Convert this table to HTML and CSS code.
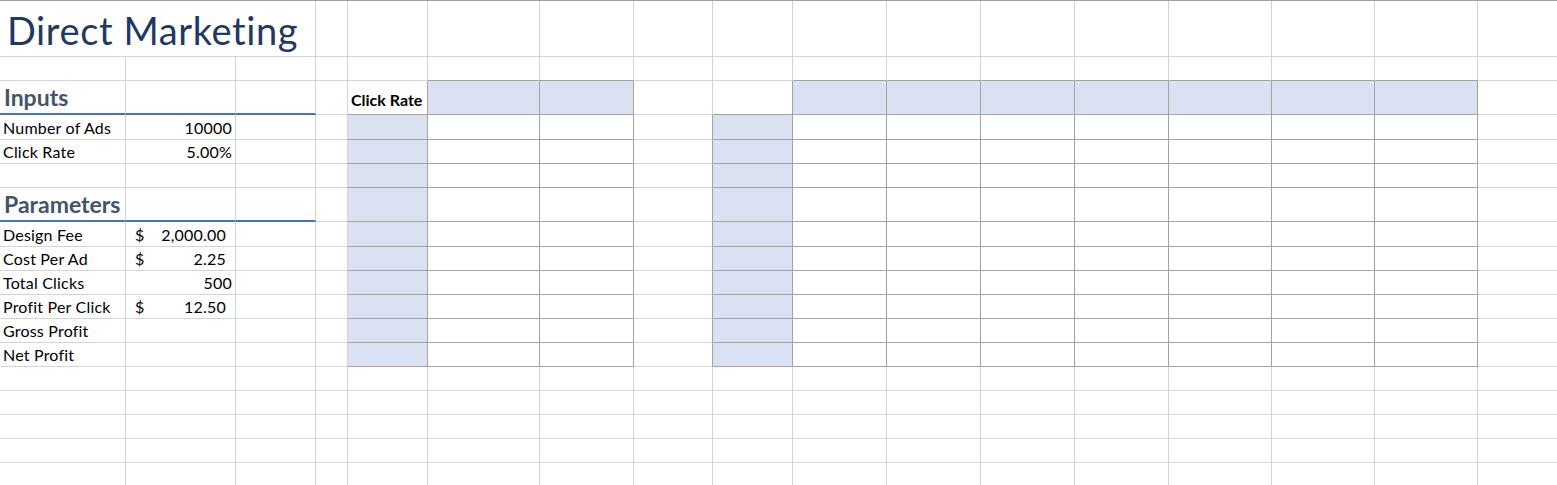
FILE: index.html
```html
<!DOCTYPE html>
<html lang="en">
<head>
<meta charset="utf-8">
<title>Direct Marketing</title>
<link rel="stylesheet" href="styles.css">
</head>
<body>
<div class="sheet">
  <!-- row 1 -->
  <div class="title">Direct Marketing</div>
  <div></div><div></div><div></div><div></div><div></div><div></div><div></div>
  <div></div><div></div><div></div><div></div><div></div><div></div><div></div>
  <!-- row 2 -->
  <div></div><div></div><div></div><div></div><div></div><div class="db"></div><div class="db"></div><div></div><div></div><div class="db"></div><div class="db"></div><div class="db"></div><div class="db"></div><div class="db"></div><div class="db"></div><div class="db"></div><div></div>
  <!-- row 3 -->
  <div class="hb heading">Inputs</div><div class="hb"></div><div class="hb"></div><div></div><div class="dr db bold">Click Rate</div><div class="sh dr db"></div><div class="sh dr db"></div><div></div><div class="dr db"></div><div class="sh dr db"></div><div class="sh dr db"></div><div class="sh dr db"></div><div class="sh dr db"></div><div class="sh dr db"></div><div class="sh dr db"></div><div class="sh dr db"></div><div></div>
  <!-- row 4 -->
  <div class="lbl">Number of Ads</div><div class="num">10000</div><div></div><div></div><div class="sh dr db"></div><div class="dr db"></div><div class="dr db"></div><div class="dr"></div><div class="sh dr db"></div><div class="dr db"></div><div class="dr db"></div><div class="dr db"></div><div class="dr db"></div><div class="dr db"></div><div class="dr db"></div><div class="dr db"></div><div></div>
  <!-- row 5 -->
  <div class="lbl">Click Rate</div><div class="num">5.00%</div><div></div><div></div><div class="sh dr db"></div><div class="dr db"></div><div class="dr db"></div><div class="dr"></div><div class="sh dr db"></div><div class="dr db"></div><div class="dr db"></div><div class="dr db"></div><div class="dr db"></div><div class="dr db"></div><div class="dr db"></div><div class="dr db"></div><div></div>
  <!-- row 6 -->
  <div></div><div></div><div></div><div></div><div class="sh dr db"></div><div class="dr db"></div><div class="dr db"></div><div class="dr"></div><div class="sh dr db"></div><div class="dr db"></div><div class="dr db"></div><div class="dr db"></div><div class="dr db"></div><div class="dr db"></div><div class="dr db"></div><div class="dr db"></div><div></div>
  <!-- row 7 -->
  <div class="hb heading">Parameters</div><div class="hb"></div><div class="hb"></div><div></div><div class="sh dr db"></div><div class="dr db"></div><div class="dr db"></div><div class="dr"></div><div class="sh dr db"></div><div class="dr db"></div><div class="dr db"></div><div class="dr db"></div><div class="dr db"></div><div class="dr db"></div><div class="dr db"></div><div class="dr db"></div><div></div>
  <!-- row 8 -->
  <div class="lbl">Design Fee</div><div class="acct"><span>$</span><span>2,000.00</span></div><div></div><div></div><div class="sh dr db"></div><div class="dr db"></div><div class="dr db"></div><div class="dr"></div><div class="sh dr db"></div><div class="dr db"></div><div class="dr db"></div><div class="dr db"></div><div class="dr db"></div><div class="dr db"></div><div class="dr db"></div><div class="dr db"></div><div></div>
  <!-- row 9 -->
  <div class="lbl">Cost Per Ad</div><div class="acct"><span>$</span><span>2.25</span></div><div></div><div></div><div class="sh dr db"></div><div class="dr db"></div><div class="dr db"></div><div class="dr"></div><div class="sh dr db"></div><div class="dr db"></div><div class="dr db"></div><div class="dr db"></div><div class="dr db"></div><div class="dr db"></div><div class="dr db"></div><div class="dr db"></div><div></div>
  <!-- row 10 -->
  <div class="lbl">Total Clicks</div><div class="num">500</div><div></div><div></div><div class="sh dr db"></div><div class="dr db"></div><div class="dr db"></div><div class="dr"></div><div class="sh dr db"></div><div class="dr db"></div><div class="dr db"></div><div class="dr db"></div><div class="dr db"></div><div class="dr db"></div><div class="dr db"></div><div class="dr db"></div><div></div>
  <!-- row 11 -->
  <div class="lbl">Profit Per Click</div><div class="acct"><span>$</span><span>12.50</span></div><div></div><div></div><div class="sh dr db"></div><div class="dr db"></div><div class="dr db"></div><div class="dr"></div><div class="sh dr db"></div><div class="dr db"></div><div class="dr db"></div><div class="dr db"></div><div class="dr db"></div><div class="dr db"></div><div class="dr db"></div><div class="dr db"></div><div></div>
  <!-- row 12 -->
  <div class="lbl">Gross Profit</div><div></div><div></div><div></div><div class="sh dr db"></div><div class="dr db"></div><div class="dr db"></div><div class="dr"></div><div class="sh dr db"></div><div class="dr db"></div><div class="dr db"></div><div class="dr db"></div><div class="dr db"></div><div class="dr db"></div><div class="dr db"></div><div class="dr db"></div><div></div>
  <!-- row 13 -->
  <div class="lbl">Net Profit</div><div></div><div></div><div></div><div class="sh dr db"></div><div class="dr db"></div><div class="dr db"></div><div class="dr"></div><div class="sh dr db"></div><div class="dr db"></div><div class="dr db"></div><div class="dr db"></div><div class="dr db"></div><div class="dr db"></div><div class="dr db"></div><div class="dr db"></div><div></div>
  <!-- rows 14-18 -->
  <div></div><div></div><div></div><div></div><div></div><div></div><div></div><div></div><div></div><div></div><div></div><div></div><div></div><div></div><div></div><div></div><div></div>
  <div></div><div></div><div></div><div></div><div></div><div></div><div></div><div></div><div></div><div></div><div></div><div></div><div></div><div></div><div></div><div></div><div></div>
  <div></div><div></div><div></div><div></div><div></div><div></div><div></div><div></div><div></div><div></div><div></div><div></div><div></div><div></div><div></div><div></div><div></div>
  <div></div><div></div><div></div><div></div><div></div><div></div><div></div><div></div><div></div><div></div><div></div><div></div><div></div><div></div><div></div><div></div><div></div>
  <div></div><div></div><div></div><div></div><div></div><div></div><div></div><div></div><div></div><div></div><div></div><div></div><div></div><div></div><div></div><div></div><div></div>
</div>
</body>
</html>
```

FILE: styles.css
```css
* {
  box-sizing: border-box;
  margin: 0;
  padding: 0;
}

html, body {
  background: #ffffff;
}

body {
  margin: 0;
  overflow: hidden;
  font-family: "Lato", "Noto Sans", sans-serif;
  font-size: 16px;
  letter-spacing: 0.2px;
  color: #000000;
}

.sheet {
  display: grid;
  grid-template-columns: 126px 110px 80px 32px 80px 112px 94px 79px 80px 94px 94px 94px 94px 103px 103px 103px 80px;
  grid-template-rows: 56px 24px 34px 25px 24px 24px 34px 25px repeat(10, 24px);
  border-top: 1px solid #9e9e9e;
  width: 1558px;
}

.sheet > div {
  border-right: 1px solid #d4d4d4;
  border-bottom: 1px solid #d4d4d4;
  display: flex;
  align-items: flex-end;
  padding: 0 3px 1px 3px;
  white-space: nowrap;
  line-height: 20px;
  min-width: 0;
}

.sheet > .title {
  grid-column: span 3;
  font-size: 38px;
  font-weight: 400;
  letter-spacing: 0.6px;
  color: #1f3864;
  padding-left: 7px;
  padding-bottom: 3px;
  line-height: 46px;
}

.sheet > .hb {
  border-bottom: 2px solid #4472c4;
}

.heading {
  font-size: 23px;
  font-weight: 700;
  letter-spacing: 0;
  color: #44546a;
}

.sheet > .heading {
  line-height: 28px;
  padding-left: 4px;
  padding-bottom: 2px;
}

.sheet > .dr {
  border-right-color: #a3a3a3;
}

.sheet > .db {
  border-bottom-color: #a3a3a3;
}

.sh {
  background: #d9e1f2;
}

.num {
  justify-content: flex-end;
}

.sheet > .acct {
  justify-content: space-between;
  padding-left: 9px;
  padding-right: 9px;
}

.sheet > .bold {
  font-weight: 700;
  letter-spacing: 0;
  padding-bottom: 4px;
}
```
